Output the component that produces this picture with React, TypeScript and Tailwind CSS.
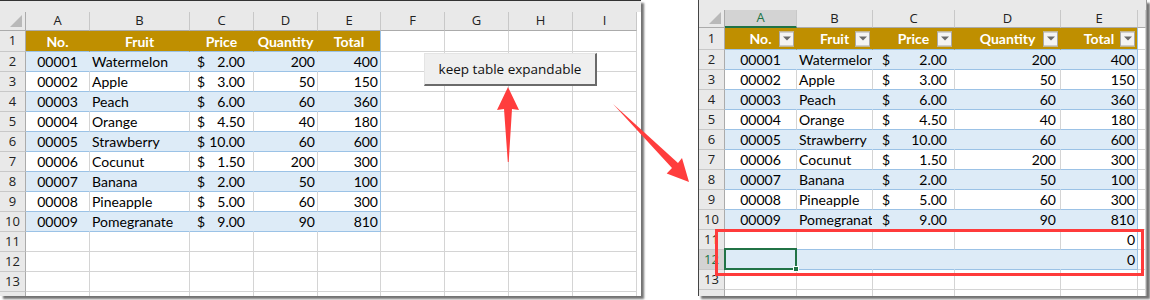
import clsx from "clsx";

const FRUITS = [
	["00001", "Watermelon", "2.00", "200", "400"],
	["00002", "Apple", "3.00", "50", "150"],
	["00003", "Peach", "6.00", "60", "360"],
	["00004", "Orange", "4.50", "40", "180"],
	["00005", "Strawberry", "10.00", "60", "600"],
	["00006", "Cocunut", "1.50", "200", "300"],
	["00007", "Banana", "2.00", "50", "100"],
	["00008", "Pineapple", "5.00", "60", "300"],
	["00009", "Pomegranate", "9.00", "90", "810"],
];

const HEADERS = ["No.", "Fruit", "Price", "Quantity", "Total"];

type SheetConfig = {
	cols: string[];
	letters: string[];
	topH: string;
	headH: string;
	row1H: string;
	tableEnd: number;
	pricePad: string;
	qtyPad: string;
	filters: boolean;
	selected: boolean;
};

const LEFT: SheetConfig = {
	cols: [
		"w-[64px]",
		"w-[100px]",
		"w-[64px]",
		"w-[64px]",
		"w-[63px]",
		"w-[64px]",
		"w-[64px]",
		"w-[64px]",
		"w-[64px]",
	],
	letters: ["A", "B", "C", "D", "E", "F", "G", "H", "I"],
	topH: "h-[11px]",
	headH: "h-[19px]",
	row1H: "h-[21px]",
	tableEnd: 10,
	pricePad: "pl-[7px] pr-[8px]",
	qtyPad: "pr-[2px]",
	filters: false,
	selected: false,
};

const RIGHT: SheetConfig = {
	cols: ["w-[72px]", "w-[76px]", "w-[82px]", "w-[106px]", "w-[77px]", "w-[8px]"],
	letters: ["A", "B", "C", "D", "E", ""],
	topH: "h-[10px]",
	headH: "h-[18px]",
	row1H: "h-[22px]",
	tableEnd: 12,
	pricePad: "pl-[9px] pr-[7px]",
	qtyPad: "pr-[4px]",
	filters: true,
	selected: true,
};

// row 14 only peeks out under the last row, so it gets no label
const ROWS = Array.from({ length: 14 }, (_, i) => i + 1);

const FilterButton = () => (
	<div className="absolute right-[2px] top-1/2 -translate-y-1/2 w-[15px] h-[15px] bg-[#f4f4f4] border border-[#a9a9a9] flex items-center justify-center">
		<div className="w-0 h-0 border-l-[4px] border-r-[4px] border-t-[4px] border-l-transparent border-r-transparent border-t-[#6a6a6a]" />
	</div>
);

const renderCell = (cfg: SheetConfig, r: number, c: number) => {
	const w = cfg.cols[c];
	const inTable = r <= cfg.tableEnd && c < 5;

	if (!inTable) {
		return (
			<div
				key={c}
				className={clsx(w, "shrink-0 h-full border-r border-b border-[#d4d4d4]")}
			/>
		);
	}

	if (r === 1) {
		return (
			<div
				key={c}
				className={clsx(
					w,
					"relative shrink-0 h-full flex items-center justify-center bg-[#bf8f00] border-b border-b-[#9bc2e6] border-r",
					c === 4 ? "border-r-[#9bc2e6]" : "border-r-transparent",
					"font-['Lato',sans-serif] text-[14px] font-bold text-white whitespace-nowrap"
				)}
			>
				{HEADERS[c]}
				{cfg.filters && <FilterButton />}
			</div>
		);
	}

	const banded = r % 2 === 0;
	const row = FRUITS[r - 2];
	const isSelected = cfg.selected && r === 12 && c === 0;

	let content = null;
	if (row) {
		if (c === 0) content = <span className="w-full text-center">{row[0]}</span>;
		if (c === 1) content = <span className="pl-[2px]">{row[1]}</span>;
		if (c === 2)
			content = (
				<span className={clsx("w-full flex justify-between", cfg.pricePad)}>
					<span>$</span>
					<span>{row[2]}</span>
				</span>
			);
		if (c === 3)
			content = <span className={clsx("w-full text-right", cfg.qtyPad)}>{row[3]}</span>;
		if (c === 4) content = <span className="w-full text-right pr-[2px]">{row[4]}</span>;
	} else if (c === 4) {
		content = <span className="w-full text-right pr-[2px]">0</span>;
	}

	return (
		<div
			key={c}
			className={clsx(
				w,
				"relative shrink-0 h-full flex items-center overflow-hidden whitespace-nowrap border-r border-b border-b-[#9bc2e6]",
				"font-['Lato',sans-serif] text-[14px] text-black",
				banded ? "bg-[#ddebf7]" : "bg-white",
				c === 4
					? "border-r-[#9bc2e6]"
					: banded
						? "border-r-transparent"
						: "border-r-[#d4d4d4]",
				isSelected && "overflow-visible z-10"
			)}
		>
			{content}
			{isSelected && (
				<>
					<div className="absolute -left-[1px] -top-[2px] w-[73px] h-[22px] border-2 border-[#217346]" />
					<div className="absolute -right-[3px] -bottom-[3px] w-[6px] h-[6px] bg-[#217346] border border-white" />
				</>
			)}
		</div>
	);
};

const Sheet = ({ cfg }: { cfg: SheetConfig }) => (
	<div className="flex flex-col">
		<div className={clsx("bg-[#e9e9e9]", cfg.topH)} />
		<div className={clsx("flex", cfg.headH)}>
			<div className="w-[26px] shrink-0 h-full bg-[#e9e9e9] border-r border-b border-[#ababab] relative">
				<svg className="absolute right-[3px] bottom-[3px]" width="12" height="12" viewBox="0 0 12 12">
					<polygon points="12,0 12,12 0,12" fill="#b9b9b9" />
				</svg>
			</div>
			{cfg.cols.map((w, c) => {
				const active = cfg.selected && c === 0;
				return (
					<div
						key={c}
						className={clsx(
							w,
							"shrink-0 h-full flex items-center justify-center border-r font-['Open_Sans',sans-serif] text-[13px]",
							active
								? "bg-[#d3d3d3] text-[#217346] border-b-2 border-b-[#217346] border-r-[#c8c8c8]"
								: "bg-[#e9e9e9] text-[#222] border-b border-b-[#ababab] border-r-[#c8c8c8]"
						)}
					>
						{cfg.letters[c]}
					</div>
				);
			})}
		</div>
		{ROWS.map((r) => {
			const active = cfg.selected && r === 12;
			return (
				<div key={r} className={clsx("flex", r === 1 ? cfg.row1H : "h-[20px]")}>
					<div
						className={clsx(
							"w-[26px] shrink-0 h-full flex items-center justify-center border-r border-b border-r-[#ababab] border-b-[#c8c8c8] font-['Open_Sans',sans-serif] text-[13px]",
							active ? "bg-[#d3d3d3] text-[#217346]" : "bg-[#e9e9e9] text-[#222]"
						)}
					>
						{r < 14 ? r : null}
					</div>
					{cfg.cols.map((_, c) => renderCell(cfg, r, c))}
				</div>
			);
		})}
	</div>
);

export default function App() {
	return (
		<div className="relative w-[1150px] h-[300px] bg-white flex items-start gap-[57px] overflow-hidden">
			<div className="relative w-[641px] h-[296px] shrink-0 bg-white border-t border-[#333] overflow-hidden shadow-[3px_3px_2px_rgba(0,0,0,0.55)]">
				<Sheet cfg={LEFT} />
				<div className="absolute left-[424px] top-[52px] w-[173px] h-[33px] flex items-center justify-center bg-[#efefef] border-l border-t border-[#e4e4e4] border-r-2 border-b-2 border-r-[#6a6a6a] border-b-[#6a6a6a] font-['Open_Sans',sans-serif] text-[13.5px] text-[#111]">
					keep table expandable
				</div>
			</div>
			<div className="relative w-[449px] h-[296px] shrink-0 bg-white border-l border-l-[#444] border-r border-r-[#9a9a9a] overflow-hidden shadow-[3px_3px_2px_rgba(0,0,0,0.55)]">
				<Sheet cfg={RIGHT} />
				<div className="absolute left-[16px] top-[229px] w-[429px] h-[47px] border-[3px] border-[#ff3b3b] z-20" />
			</div>
			<svg
				className="absolute inset-0 pointer-events-none"
				width="1150"
				height="300"
				viewBox="0 0 1150 300"
			>
				<polygon
					points="508,87 519,110 512,109 508.7,162 507.8,162 504,109 497,110"
					fill="#ff3d3d"
				/>
				<polygon
					points="613,104 678,163 682,158 689,182 666.7,173.5 672,168"
					fill="#ff3d3d"
				/>
			</svg>
		</div>
	);
}
